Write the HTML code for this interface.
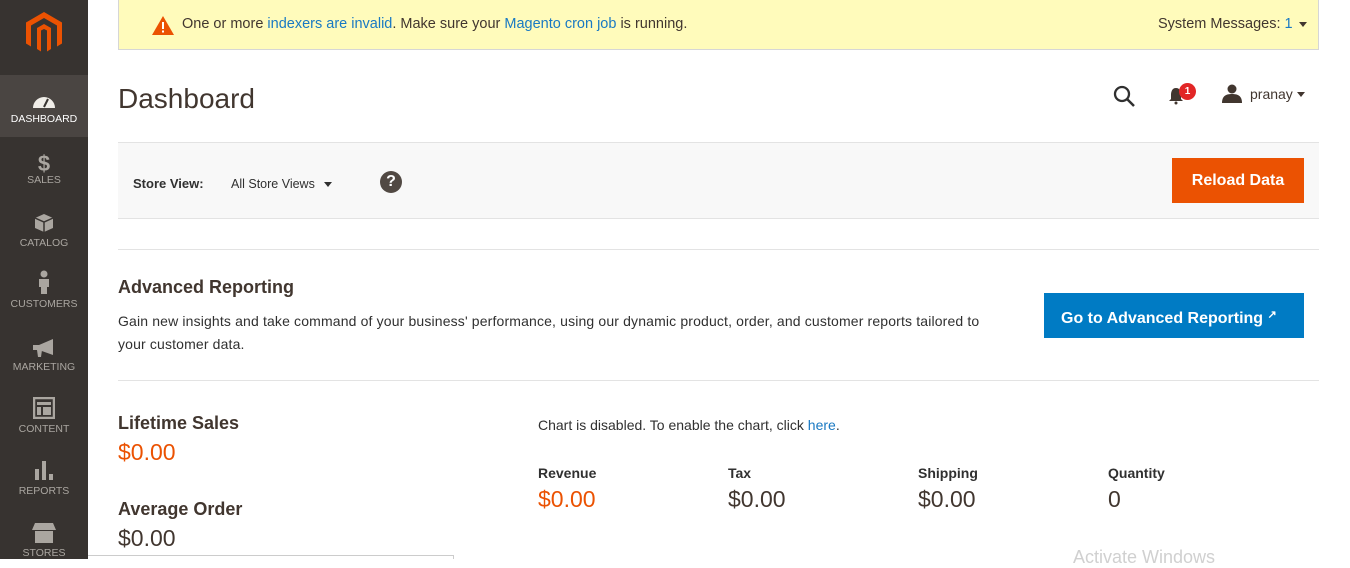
<!DOCTYPE html>
<html><head><meta charset="utf-8"><style>
*{margin:0;padding:0;box-sizing:border-box}
body{width:1350px;height:559px;overflow:hidden;background:#fff;font-family:"Liberation Sans",sans-serif;color:#303030;position:relative}
.a{position:absolute;white-space:nowrap}
#side{position:absolute;left:0;top:0;width:88px;height:559px;background:#373330}
.it{position:absolute;left:0;width:88px;text-align:center;color:#aaa6a0;font-size:10.5px}
.it svg{display:block;margin:0 auto 4px}
.lnk{color:#1979c3}
.h{color:#41362f;font-weight:bold;font-size:18px}
.lab{font-size:14px;font-weight:bold;color:#303030}
.val{font-size:23px;color:#41362f}
.or{color:#eb5202}
</style></head><body>
<div id="side">
  <svg class="a" style="left:26px;top:12px" width="36" height="42" viewBox="0 0 36 42"><path d="M18 0L36 10.5V31.5L31 34.5V13.5L18 6 5 13.5V34.5L0 31.5V10.5Z" fill="#eb5202"/><path d="M11 16L18 12 25 16V37L21 39.5V18.5L18 17 15 18.5V39.5L11 37Z" fill="#eb5202"/></svg>
  <div class="a" style="left:0;top:75px;width:88px;height:62px;background:#4a4542"></div>
  <div class="it" style="top:93px;color:#fff"><svg width="24" height="16" viewBox="0 0 24 16"><path d="M1 15A11 11 0 0 1 23 15Z" fill="#f0ede8"/><path d="M12 14L16 6" stroke="#373330" stroke-width="2"/></svg>DASHBOARD</div>
  <div class="it" style="top:153px"><div style="font-size:22px;font-weight:bold;line-height:21px;color:#aaa6a0">$</div>SALES</div>
  <div class="it" style="top:213px"><svg width="20" height="20" viewBox="0 0 20 20"><path d="M10 1L19 5V15L10 19 1 15V5Z" fill="#aaa6a0"/><path d="M1 5L10 9 19 5M10 9V19" stroke="#373330" stroke-width="1.5" fill="none"/></svg>CATALOG</div>
  <div class="it" style="top:270px"><svg width="14" height="24" viewBox="0 0 14 24"><circle cx="7" cy="4" r="3.5" fill="#aaa6a0"/><path d="M2 9H12V17H10V24H4V17H2Z" fill="#aaa6a0"/></svg>CUSTOMERS</div>
  <div class="it" style="top:339px"><svg width="26" height="18" viewBox="0 0 26 18"><path d="M2 6H8L22 0V16L8 11H2Z" fill="#aaa6a0"/><path d="M6 11H11L10 18H7Z" fill="#aaa6a0"/></svg>MARKETING</div>
  <div class="it" style="top:397px"><svg width="22" height="22" viewBox="0 0 22 22"><rect x="1" y="1" width="20" height="20" fill="none" stroke="#aaa6a0" stroke-width="2.5"/><rect x="4" y="5" width="14" height="3" fill="#aaa6a0"/><rect x="4" y="10" width="4" height="8" fill="#aaa6a0"/><rect x="10" y="10" width="8" height="8" fill="#aaa6a0"/></svg>CONTENT</div>
  <div class="it" style="top:459px"><svg width="22" height="22" viewBox="0 0 22 22"><rect x="2" y="10" width="4" height="11" fill="#aaa6a0"/><rect x="9" y="2" width="4" height="19" fill="#aaa6a0"/><rect x="16" y="15" width="4" height="6" fill="#aaa6a0"/></svg>REPORTS</div>
  <div class="it" style="top:523px"><svg width="24" height="20" viewBox="0 0 24 20"><path d="M3 0H21L24 7H0Z" fill="#aaa6a0"/><rect x="3" y="8" width="18" height="12" fill="#aaa6a0"/></svg>STORES</div>
</div>

<div class="a" style="left:118px;top:0;width:1201px;height:50px;background:#fffbbb;border:1px solid #d6d6d6;border-top:none"></div>
<svg class="a" style="left:152px;top:16px" width="22" height="19" viewBox="0 0 22 19"><path d="M11 0L22 19H0Z" fill="#eb5202"/><rect x="10" y="6" width="2" height="7" fill="#fff"/><rect x="10" y="14.5" width="2" height="2" fill="#fff"/></svg>
<div class="a" style="left:182px;top:16px;font-size:14.5px;color:#41362f">One or more <span class="lnk">indexers are invalid</span>. Make sure your <span class="lnk">Magento cron job</span> is running.</div>
<div class="a" style="left:1158px;top:16px;font-size:14.5px;color:#41362f">System Messages: <span class="lnk">1</span></div>
<div class="a" style="left:1299px;top:22px;border:4px solid transparent;border-top:5px solid #41362f"></div>

<div class="a" style="left:118px;top:83px;font-size:28px;color:#41362f">Dashboard</div>
<svg class="a" style="left:1113px;top:85px" width="22" height="22" viewBox="0 0 22 22"><circle cx="9" cy="9" r="7" fill="none" stroke="#303030" stroke-width="2.3"/><path d="M14 14L21 21" stroke="#303030" stroke-width="2.5"/></svg>
<svg class="a" style="left:1167px;top:87px" width="18" height="18" viewBox="0 0 18 18"><path d="M9 1C5 1 4 5 4 8V12L2 14H16L14 12V8C14 5 13 1 9 1Z" fill="#41362f"/><circle cx="9" cy="16" r="1.5" fill="#41362f"/></svg>
<div class="a" style="left:1179px;top:83px;width:17px;height:17px;border-radius:50%;background:#e22626;color:#fff;font-size:10px;font-weight:bold;text-align:center;line-height:17px">1</div>
<svg class="a" style="left:1222px;top:84px" width="20" height="19" viewBox="0 0 20 19"><circle cx="10" cy="5" r="4.5" fill="#41362f"/><path d="M0 19C0 12 4 10 10 10S20 12 20 19Z" fill="#41362f"/></svg>
<div class="a" style="left:1250px;top:86px;font-size:14px;color:#41362f">pranay</div>
<div class="a" style="left:1297px;top:92px;border:4px solid transparent;border-top:5px solid #41362f"></div>

<div class="a" style="left:118px;top:142px;width:1201px;height:77px;background:#f8f8f8;border-top:1px solid #e3e3e3;border-bottom:1px solid #e3e3e3"></div>
<div class="a" style="left:133px;top:176px;font-size:13px;font-weight:bold;color:#303030">Store View:</div>
<div class="a" style="left:231px;top:177px;font-size:12.5px;color:#303030">All Store Views</div>
<div class="a" style="left:324px;top:182px;border:4px solid transparent;border-top:5px solid #303030"></div>
<div class="a" style="left:380px;top:171px;width:22px;height:22px;border-radius:50%;background:#514943;color:#fff;font-weight:bold;font-size:16px;text-align:center;line-height:22px">?</div>
<div class="a" style="left:1172px;top:158px;width:132px;height:45px;background:#eb5202;color:#fff;font-size:16px;font-weight:bold;text-align:center;line-height:45px">Reload Data</div>

<div class="a" style="left:118px;top:249px;width:1201px;height:1px;background:#e3e3e3"></div>
<div class="a h" style="left:118px;top:277px">Advanced Reporting</div>
<div class="a" style="left:118px;top:310px;font-size:14px;line-height:23px;color:#303030;white-space:normal;width:875px;letter-spacing:0.15px">Gain new insights and take command of your business' performance, using our dynamic product, order, and customer reports tailored to your customer data.</div>
<div class="a" style="left:1044px;top:293px;width:260px;height:45px;background:#007bc4;color:#fff;font-size:16px;font-weight:bold;line-height:45px;padding-left:17px">Go to Advanced Reporting <span style="font-size:11px;vertical-align:5px">&#x2197;</span></div>
<div class="a" style="left:118px;top:380px;width:1201px;height:1px;background:#e3e3e3"></div>

<div class="a h" style="left:118px;top:413px">Lifetime Sales</div>
<div class="a val or" style="left:118px;top:439px">$0.00</div>
<div class="a h" style="left:118px;top:499px">Average Order</div>
<div class="a val" style="left:118px;top:525px">$0.00</div>

<div class="a" style="left:538px;top:417px;font-size:14px;color:#303030">Chart is disabled. To enable the chart, click <span class="lnk">here</span>.</div>
<div class="a lab" style="left:538px;top:465px">Revenue</div>
<div class="a lab" style="left:728px;top:465px">Tax</div>
<div class="a lab" style="left:918px;top:465px">Shipping</div>
<div class="a lab" style="left:1108px;top:465px">Quantity</div>
<div class="a val or" style="left:538px;top:486px">$0.00</div>
<div class="a val" style="left:728px;top:486px">$0.00</div>
<div class="a val" style="left:918px;top:486px">$0.00</div>
<div class="a val" style="left:1108px;top:486px">0</div>

<div class="a" style="left:88px;top:555px;width:366px;height:4px;border-top:1px solid #ccc;border-right:1px solid #ccc;background:#fff"></div>
<div class="a" style="left:1073px;top:547px;font-size:18px;color:#d0d0d0">Activate Windows</div>
</body></html>
